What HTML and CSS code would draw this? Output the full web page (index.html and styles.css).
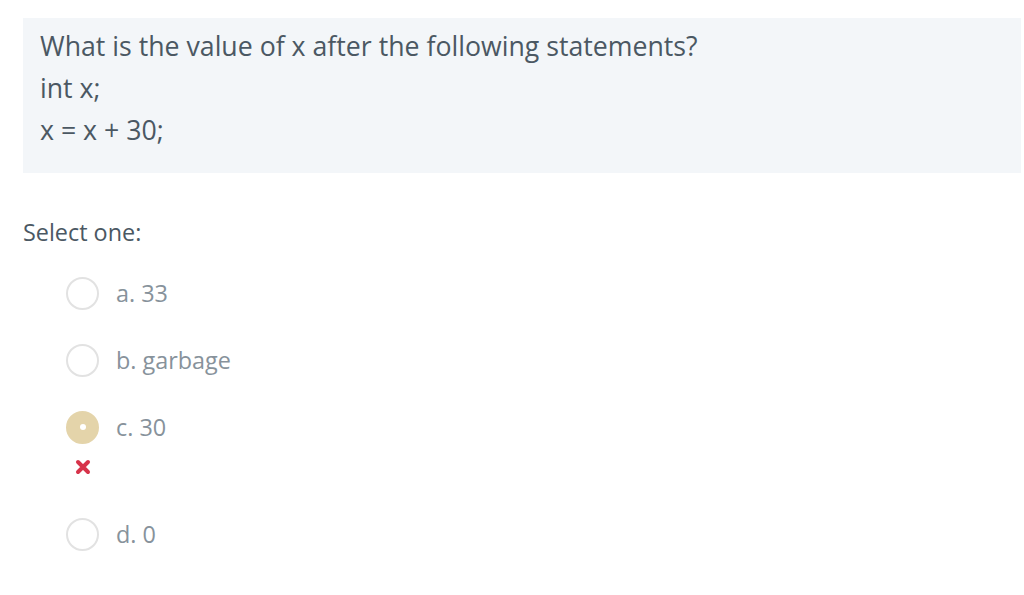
FILE: index.html
```html
<!DOCTYPE html>
<html>
<head>
<meta charset="utf-8">
<link rel="stylesheet" href="styles.css">
</head>
<body>
<div class="page">
  <div class="qtext">
    <p class="line">What is the value of x after the following statements?</p>
    <p class="line">int x;</p>
    <p class="line">x = x + 30;</p>
  </div>
  <div class="prompt">Select one:</div>
  <div class="answers">
    <div class="answer">
      <div class="row"><span class="radio"></span><span class="label">a. 33</span></div>
    </div>
    <div class="answer">
      <div class="row"><span class="radio"></span><span class="label">b. garbage</span></div>
    </div>
    <div class="answer">
      <div class="row"><span class="radio checked"><span class="dot"></span></span><span class="label">c. 30</span></div>
      <div class="feedback">
        <svg class="xicon" viewBox="0 0 16 16" width="16" height="16"><path d="M3 3 L13 13 M13 3 L3 13" stroke="#d7334a" stroke-width="4" stroke-linecap="round" fill="none"/></svg>
      </div>
    </div>
    <div class="answer">
      <div class="row"><span class="radio"></span><span class="label">d. 0</span></div>
    </div>
  </div>
</div>
</body>
</html>
```
FILE: styles.css
```css
html, body {
  margin: 0;
  padding: 0;
  background: #ffffff;
}
body {
  font-family: "Open Sans", "Noto Sans", sans-serif;
}
.page {
  padding: 18px 3px 0 23px;
}
.qtext {
  background: #f3f6f9;
  padding: 7px 17px 13px 17px;
  height: 135px;
}
.line {
  margin: 0;
  font-size: 26.7px;
  line-height: 42px;
  color: #4b5863;
}
.prompt {
  margin-top: 44px;
  font-size: 23.4px;
  line-height: 30px;
  color: #4b5863;
}
.answers {
  margin-top: 29px;
  padding-left: 43px;
}
.answer {
  margin-bottom: 33px;
}
.row {
  display: flex;
  align-items: center;
  height: 34px;
}
.radio {
  box-sizing: border-box;
  width: 33px;
  height: 33px;
  border-radius: 50%;
  border: 2px solid #e2e2e2;
  display: flex;
  align-items: center;
  justify-content: center;
  flex: none;
}
.radio.checked {
  background: #e4d4aa;
  border-color: #e4d4aa;
}
.dot {
  width: 6px;
  height: 6px;
  border-radius: 50%;
  background: #ffffff;
}
.label {
  margin-left: 17px;
  font-size: 23.4px;
  color: #87929b;
}
.feedback {
  margin-top: 15px;
  padding-left: 9px;
  padding-bottom: 9px;
}
.xicon {
  display: block;
}
```
